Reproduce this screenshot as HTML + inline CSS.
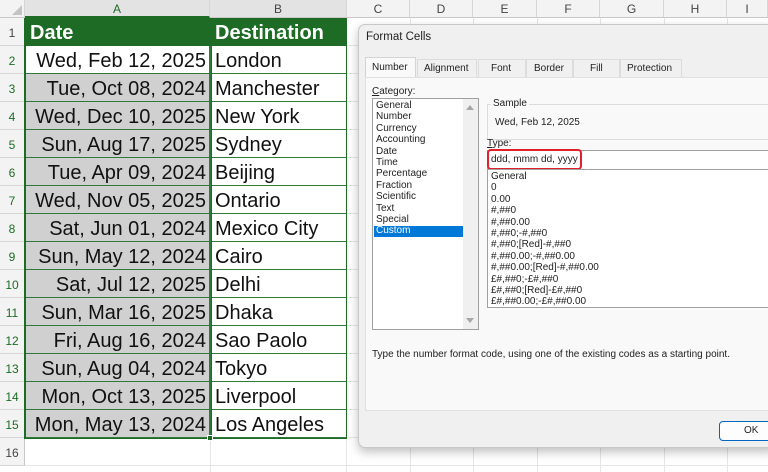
<!DOCTYPE html>
<html><head><meta charset="utf-8"><style>
*{margin:0;padding:0;box-sizing:border-box}
body{width:768px;height:472px;overflow:hidden;background:#fff;position:relative;font-family:"Liberation Sans",sans-serif}
.a{position:absolute}
.ch{position:absolute;top:0;height:18px;background:#f3f3f3;border-right:1px solid #d6d6d6;border-bottom:1px solid #c8c8c8;font-size:12px;color:#444;text-align:center;line-height:18px}
.rh{position:absolute;left:0;width:25px;height:28px;background:#f3f3f3;border-bottom:1px solid #d6d6d6;border-right:1px solid #c8c8c8;font-size:12px;color:#444;text-align:center;line-height:30px}
.gl{position:absolute;background:#e6e6e6}
.c{position:absolute;height:28px;font-size:20px;line-height:30px;color:#111;white-space:nowrap;border-bottom:1px solid #2f7a3a}
.d{font-size:10px;color:#222;position:absolute;white-space:nowrap}
</style></head><body>
<div class="a" style="left:0;top:0;width:768px;height:472px;background:repeating-linear-gradient(to bottom,#fff 0 27px,#e6e6e6 27px 28px);background-position:0 18px"></div>
<div class="gl" style="left:410px;top:0;width:1px;height:472px"></div>
<div class="gl" style="left:473px;top:0;width:1px;height:472px"></div>
<div class="gl" style="left:537px;top:0;width:1px;height:472px"></div>
<div class="gl" style="left:600px;top:0;width:1px;height:472px"></div>
<div class="gl" style="left:664px;top:0;width:1px;height:472px"></div>
<div class="gl" style="left:727px;top:0;width:1px;height:472px"></div>
<div class="gl" style="left:210px;top:0;width:1px;height:472px"></div>
<div class="gl" style="left:346px;top:0;width:1px;height:472px"></div>
<div class="ch" style="left:0;width:25px"></div>
<div class="a" style="left:12px;top:5px;width:0;height:0;border-left:10px solid transparent;border-bottom:10px solid #c4c4c4"></div>
<div class="ch" style="left:25px;width:185px;color:#1d6b25;background:#e3e3e3;border-bottom:2px solid #1d6b25">A</div>
<div class="ch" style="left:210px;width:137px;background:#e3e3e3">B</div>
<div class="ch" style="left:347px;width:63px">C</div>
<div class="ch" style="left:410px;width:63px">D</div>
<div class="ch" style="left:473px;width:64px">E</div>
<div class="ch" style="left:537px;width:63px">F</div>
<div class="ch" style="left:600px;width:64px">G</div>
<div class="ch" style="left:664px;width:63px">H</div>
<div class="ch" style="left:727px;width:41px">I</div>
<div class="rh" style="top:18px">1</div>
<div class="rh" style="top:46px;color:#1d6b25">2</div>
<div class="rh" style="top:74px;color:#1d6b25">3</div>
<div class="rh" style="top:102px;color:#1d6b25">4</div>
<div class="rh" style="top:130px;color:#1d6b25">5</div>
<div class="rh" style="top:158px;color:#1d6b25">6</div>
<div class="rh" style="top:186px;color:#1d6b25">7</div>
<div class="rh" style="top:214px;color:#1d6b25">8</div>
<div class="rh" style="top:242px;color:#1d6b25">9</div>
<div class="rh" style="top:270px;color:#1d6b25">10</div>
<div class="rh" style="top:298px;color:#1d6b25">11</div>
<div class="rh" style="top:326px;color:#1d6b25">12</div>
<div class="rh" style="top:354px;color:#1d6b25">13</div>
<div class="rh" style="top:382px;color:#1d6b25">14</div>
<div class="rh" style="top:410px;color:#1d6b25">15</div>
<div class="rh" style="top:438px">16</div>
<div class="a" style="left:25px;top:18px;width:322px;height:28px;background:#1d6b25"></div>
<div class="a" style="left:30px;top:18px;font-size:20px;line-height:30px;color:#fff;font-weight:bold">Date</div>
<div class="a" style="left:215px;top:18px;font-size:20px;line-height:30px;color:#fff;font-weight:bold">Destination</div>
<div class="a" style="left:25px;top:74px;width:185px;height:364px;background:#d0d0d0"></div>
<div class="c" style="left:25px;top:46px;width:185px;text-align:right;padding-right:4px">Wed, Feb 12, 2025</div>
<div class="c" style="left:25px;top:74px;width:185px;text-align:right;padding-right:4px">Tue, Oct 08, 2024</div>
<div class="c" style="left:25px;top:102px;width:185px;text-align:right;padding-right:4px">Wed, Dec 10, 2025</div>
<div class="c" style="left:25px;top:130px;width:185px;text-align:right;padding-right:4px">Sun, Aug 17, 2025</div>
<div class="c" style="left:25px;top:158px;width:185px;text-align:right;padding-right:4px">Tue, Apr 09, 2024</div>
<div class="c" style="left:25px;top:186px;width:185px;text-align:right;padding-right:4px">Wed, Nov 05, 2025</div>
<div class="c" style="left:25px;top:214px;width:185px;text-align:right;padding-right:4px">Sat, Jun 01, 2024</div>
<div class="c" style="left:25px;top:242px;width:185px;text-align:right;padding-right:4px">Sun, May 12, 2024</div>
<div class="c" style="left:25px;top:270px;width:185px;text-align:right;padding-right:4px">Sat, Jul 12, 2025</div>
<div class="c" style="left:25px;top:298px;width:185px;text-align:right;padding-right:4px">Sun, Mar 16, 2025</div>
<div class="c" style="left:25px;top:326px;width:185px;text-align:right;padding-right:4px">Fri, Aug 16, 2024</div>
<div class="c" style="left:25px;top:354px;width:185px;text-align:right;padding-right:4px">Sun, Aug 04, 2024</div>
<div class="c" style="left:25px;top:382px;width:185px;text-align:right;padding-right:4px">Mon, Oct 13, 2025</div>
<div class="c" style="left:25px;top:410px;width:185px;text-align:right;padding-right:4px">Mon, May 13, 2024</div>
<div class="c" style="left:211px;top:46px;width:136px;padding-left:4px">London</div>
<div class="c" style="left:211px;top:74px;width:136px;padding-left:4px">Manchester</div>
<div class="c" style="left:211px;top:102px;width:136px;padding-left:4px">New York</div>
<div class="c" style="left:211px;top:130px;width:136px;padding-left:4px">Sydney</div>
<div class="c" style="left:211px;top:158px;width:136px;padding-left:4px">Beijing</div>
<div class="c" style="left:211px;top:186px;width:136px;padding-left:4px">Ontario</div>
<div class="c" style="left:211px;top:214px;width:136px;padding-left:4px">Mexico City</div>
<div class="c" style="left:211px;top:242px;width:136px;padding-left:4px">Cairo</div>
<div class="c" style="left:211px;top:270px;width:136px;padding-left:4px">Delhi</div>
<div class="c" style="left:211px;top:298px;width:136px;padding-left:4px">Dhaka</div>
<div class="c" style="left:211px;top:326px;width:136px;padding-left:4px">Sao Paolo</div>
<div class="c" style="left:211px;top:354px;width:136px;padding-left:4px">Tokyo</div>
<div class="c" style="left:211px;top:382px;width:136px;padding-left:4px">Liverpool</div>
<div class="c" style="left:211px;top:410px;width:136px;padding-left:4px">Los Angeles</div>
<div class="a" style="left:209px;top:46px;width:2px;height:392px;background:#2f7a3a"></div>
<div class="a" style="left:25px;top:18px;width:322px;height:421px;border:1px solid #1d6b25"></div>
<div class="a" style="left:24px;top:18px;width:188px;height:421px;border:1px solid #1d6b25"></div>
<div class="a" style="left:207px;top:435px;width:6px;height:6px;background:#1d6b25;border:1px solid #fff"></div>
<div class="a" style="left:358px;top:24px;width:420px;height:424px;background:#f0f0f0;border:1px solid #c8c8c8;border-radius:7px;box-shadow:0 4px 10px rgba(0,0,0,.25)"></div>
<div class="a" style="left:366px;top:31px;font-size:11.5px;color:#222">Format Cells</div>
<div class="a" style="left:365px;top:57px;width:51px;height:20px;background:#f9f9f9;border:1px solid #d4d4d4;border-bottom:none"></div>
<div class="d" style="left:372px;top:62px">Number</div>
<div class="a" style="left:417px;top:59px;width:60px;height:18px;background:#f0f0f0;border:1px solid #dcdcdc;border-bottom:none"></div>
<div class="d" style="left:424px;top:63px">Alignment</div>
<div class="a" style="left:478px;top:59px;width:48px;height:18px;border:1px solid #dcdcdc;border-bottom:none"></div>
<div class="d" style="left:491px;top:63px">Font</div>
<div class="a" style="left:526px;top:59px;width:47px;height:18px;border:1px solid #dcdcdc;border-bottom:none"></div>
<div class="d" style="left:534px;top:63px">Border</div>
<div class="a" style="left:573px;top:59px;width:47px;height:18px;border:1px solid #dcdcdc;border-bottom:none"></div>
<div class="d" style="left:590px;top:63px">Fill</div>
<div class="a" style="left:620px;top:59px;width:62px;height:18px;border:1px solid #dcdcdc;border-bottom:none"></div>
<div class="d" style="left:627px;top:63px">Protection</div>
<div class="a" style="left:365px;top:77px;width:410px;height:334px;background:#f9f9f9;border:1px solid #e0e0e0"></div>
<div class="d" style="left:372px;top:86px"><u>C</u>ategory:</div>
<div class="a" style="left:372px;top:98px;width:107px;height:232px;background:#fff;border:1px solid #a0a0a0"></div>
<div class="a" style="left:463px;top:99px;width:15px;height:230px;background:#f0f0f0"></div>
<div class="a" style="left:466px;top:105px;width:0;height:0;border-left:4px solid transparent;border-right:4px solid transparent;border-bottom:5px solid #a8a8a8"></div>
<div class="a" style="left:466px;top:318px;width:0;height:0;border-left:4px solid transparent;border-right:4px solid transparent;border-top:5px solid #a8a8a8"></div>
<div class="a" style="left:374px;top:226px;width:89px;height:11px;background:#0078d7"></div>
<div class="d" style="left:376px;top:100px;line-height:11.4px">General<br>Number<br>Currency<br>Accounting<br>Date<br>Time<br>Percentage<br>Fraction<br>Scientific<br>Text<br>Special<br><span style="color:#fff">Custom</span></div>
<div class="a" style="left:487px;top:104px;width:290px;height:36px;border:1px solid #dcdcdc"></div>
<div class="a" style="left:491px;top:98px;background:#f9f9f9;padding:0 2px;font-size:10px;color:#222">Sample</div>
<div class="d" style="left:495px;top:117px">Wed, Feb 12, 2025</div>
<div class="d" style="left:487px;top:138px"><u>T</u>ype:</div>
<div class="a" style="left:487px;top:150px;width:290px;height:20px;background:#fff;border:1px solid #a0a0a0"></div>
<div class="a" style="left:487px;top:149px;width:95px;height:21px;border:2px solid #e0202a;border-radius:4px"></div>
<div class="d" style="left:491px;top:154px">ddd, mmm dd, yyyy</div>
<div class="a" style="left:487px;top:169px;width:290px;height:139px;background:#fff;border:1px solid #a0a0a0"></div>
<div class="d" style="left:491px;top:171px;line-height:11.4px">General<br>0<br>0.00<br>#,##0<br>#,##0.00<br>#,##0;-#,##0<br>#,##0;[Red]-#,##0<br>#,##0.00;-#,##0.00<br>#,##0.00;[Red]-#,##0.00<br>£#,##0;-£#,##0<br>£#,##0;[Red]-£#,##0<br>£#,##0.00;-£#,##0.00</div>
<div class="d" style="left:372px;top:349px">Type the number format code, using one of the existing codes as a starting point.</div>
<div class="a" style="left:719px;top:421px;width:60px;height:20px;background:#fdfdfd;border:1px solid #0067c0;border-radius:4px"></div>
<div class="d" style="left:744px;top:425px">OK</div>
</body></html>
